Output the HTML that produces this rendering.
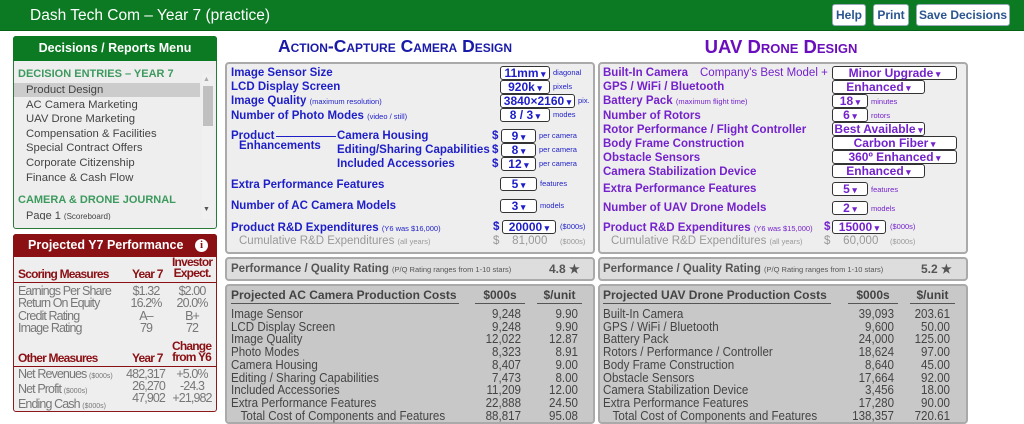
<!DOCTYPE html>
<html><head><meta charset="utf-8"><style>
*{margin:0;padding:0;box-sizing:border-box}
body{width:1024px;height:419px;overflow:hidden;background:#fff;font-family:"Liberation Sans",Arial,sans-serif;position:relative}
.a{position:absolute;white-space:nowrap}
#hdr{left:0;top:0;width:1024px;height:31px;background:#0b7a22;border-bottom:1px solid #066016}
.btn{position:absolute;top:4px;height:22px;background:#fff;border:1px solid #9ab;border-radius:3px;color:#2a5590;font-weight:bold;font-size:12px;line-height:20px;text-align:center}
.box{position:absolute;background:#eee;border:2px solid #aaa;border-radius:4px}
.lb{font-weight:bold;font-size:11.5px;line-height:14px}
.bl{color:#1e1ec8}.pu{color:#7422cc}
.sm{font-weight:normal;font-size:7.5px}
.sel{position:absolute;height:14px;background:#fff;border:1px solid #333;border-radius:3px;font-weight:bold;font-size:12px;line-height:12px;text-align:center}
.sel:after{content:" \25BE";font-size:9px}
.un{font-size:7.5px;line-height:14px}
.gr{color:#999}
.crow{font-size:13.3px;line-height:12.7px;color:#444;transform:scaleX(0.87);transform-origin:0 0}
.crr{transform-origin:100% 0}
.pt{color:#777;font-size:12.5px;line-height:12.3px;letter-spacing:-0.9px}
.ph{color:#8b1014;font-size:12px;letter-spacing:-0.8px;font-weight:bold}
</style></head><body>
<div id="hdr" class="a"></div>
<div class="a" style="left:30px;top:7px;color:#fff;font-size:15.5px">Dash Tech Com – Year 7 (practice)</div>
<div class="btn" style="left:832px;width:34px">Help</div>
<div class="btn" style="left:873px;width:36px">Print</div>
<div class="btn" style="left:916px;width:94px">Save Decisions</div>

<!-- left menu -->
<div class="a" style="left:13px;top:36px;width:204px;height:193px;border:1px solid #2a7a3a;border-radius:3px;background:#eee"></div>
<div class="a" style="left:13px;top:36px;width:204px;height:25px;background:#0b7a22;border-radius:3px 3px 0 0;color:#fff;font-weight:bold;font-size:12.5px;line-height:25px;text-align:center">Decisions / Reports Menu</div>
<div class="a" style="left:18px;top:68px;color:#3d9a5e;font-weight:bold;font-size:11px">DECISION ENTRIES – YEAR 7</div>
<div class="a" style="left:14px;top:83px;width:186px;height:14px;background:#ccc"></div>
<div class="a" style="left:26px;top:83px;color:#444;font-size:11.3px;line-height:14.6px">Product Design<br>AC Camera Marketing<br>UAV Drone Marketing<br>Compensation &amp; Facilities<br>Special Contract Offers<br>Corporate Citizenship<br>Finance &amp; Cash Flow</div>
<div class="a" style="left:18px;top:194px;color:#3d9a5e;font-weight:bold;font-size:11px">CAMERA &amp; DRONE JOURNAL</div>
<div class="a" style="left:26px;top:209px;height:11px;overflow:hidden;color:#444;font-size:11px;line-height:14px">Page 1 <span style="font-size:8px">(Scoreboard)</span></div>
<div class="a" style="left:202px;top:74px;width:12px;height:145px;background:#f0f0f0"></div>
<div class="a" style="left:203px;top:76px;font-size:7px;color:#aaa">▲</div>
<div class="a" style="left:203px;top:206px;font-size:7px;color:#555">▼</div>
<div class="a" style="left:203px;top:86px;width:10px;height:40px;background:#c0c0c0"></div>

<!-- performance -->
<div class="a" style="left:13px;top:234px;width:204px;height:178px;border:1px solid #8b1a1a;border-radius:3px;background:#eee"></div>
<div class="a" style="left:13px;top:234px;width:204px;height:23px;background:#8b1014;border-radius:3px 3px 0 0;color:#fff;font-weight:bold;font-size:12.5px;line-height:23px;padding-left:15px">Projected Y7 Performance</div>
<div class="a" style="left:195px;top:239px;width:13px;height:13px;border-radius:50%;background:#fff;color:#8b1014;font-weight:bold;font-size:11px;line-height:13px;text-align:center;font-family:'Liberation Serif',serif">i</div>
<div class="a ph" style="left:18px;top:267px">Scoring Measures</div>
<div class="a ph" style="left:132px;top:267px">Year 7</div>
<div class="a ph" style="left:172px;top:257px;line-height:10.5px;text-align:center">Investor<br>Expect.</div>
<div class="a" style="left:14px;top:282px;width:202px;border-top:1px solid #8b1014"></div>
<div class="a pt" style="left:18px;top:285px">Earnings Per Share<br>Return On Equity<br>Credit Rating<br>Image Rating</div>
<div class="a pt" style="left:126px;top:285px;width:40px;text-align:center">$1.32<br>16.2%<br>A–<br>79</div>
<div class="a pt" style="left:170px;top:285px;width:44px;text-align:center">$2.00<br>20.0%<br>B+<br>72</div>
<div class="a ph" style="left:18px;top:351px">Other Measures</div>
<div class="a ph" style="left:132px;top:351px">Year 7</div>
<div class="a ph" style="left:172px;top:341px;line-height:10.5px;text-align:center">Change<br>from Y6</div>
<div class="a" style="left:14px;top:366px;width:202px;border-top:1px solid #8b1014"></div>
<div class="a pt" style="left:18px;top:368px;line-height:12px">Net Revenues <span style="font-size:7px;letter-spacing:0">($000s)</span><br>Net Profit <span style="font-size:7px;letter-spacing:0">($000s)</span><br>Ending Cash <span style="font-size:7px;letter-spacing:0">($000s)</span></div>
<div class="a pt" style="left:122px;top:368px;width:43px;text-align:right;line-height:12px">482,317<br>26,270<br>47,902</div>
<div class="a pt" style="left:168px;top:368px;width:48px;text-align:center;line-height:12px">+5.0%<br>-24.3<br>+21,982</div>

<!-- titles -->
<div class="a" style="left:225px;top:36px;width:340px;text-align:center;color:#1a1aa8;font-weight:bold;font-size:17.5px;font-variant:small-caps">Action-Capture Camera Design</div>
<div class="a" style="left:598px;top:36px;width:366px;text-align:center;color:#6a0dbd;font-weight:bold;font-size:18.5px;font-variant:small-caps">UAV Drone Design</div>

<!-- middle box -->
<div class="box" style="left:225px;top:62px;width:370px;height:192px"></div>
<div class="a lb bl" style="left:231px;top:66px;line-height:14px">Image Sensor Size<br>LCD Display Screen<br>Image Quality <span class="sm">(maximum resolution)</span><br>Number of Photo Modes <span class="sm">(video / still)</span></div>
<div class="sel bl" style="left:500px;top:66px;width:50px">11mm</div>
<div class="sel bl" style="left:500px;top:80px;width:50px">920k</div>
<div class="sel bl" style="left:500px;top:94px;width:75px">3840×2160</div>
<div class="sel bl" style="left:500px;top:108px;width:50px">8 / 3</div>
<div class="a un bl" style="left:553px;top:66px">diagonal</div>
<div class="a un bl" style="left:553px;top:80px">pixels</div>
<div class="a un bl" style="left:578px;top:94px">pix.</div>
<div class="a un bl" style="left:553px;top:108px">modes</div>
<div class="a lb bl" style="left:231px;top:129px">Product</div>
<div class="a" style="left:276px;top:136px;width:60px;border-top:1px solid #1e1ec8"></div>
<div class="a lb bl" style="left:239px;top:139px">Enhancements</div>
<div class="a lb bl" style="left:337px;top:129px;line-height:14px">Camera Housing<br>Editing/Sharing Capabilities<br>Included Accessories</div>
<div class="a lb bl" style="left:492px;top:129px;line-height:14px">$<br>$<br>$</div>
<div class="sel bl" style="left:501px;top:129px;width:35px">9</div>
<div class="sel bl" style="left:501px;top:143px;width:35px">8</div>
<div class="sel bl" style="left:501px;top:157px;width:35px">12</div>
<div class="a un bl" style="left:539px;top:129px;line-height:14px">per camera<br>per camera<br>per camera</div>
<div class="a lb bl" style="left:231px;top:178px">Extra Performance Features</div>
<div class="sel bl" style="left:500px;top:177px;width:37px">5</div>
<div class="a un bl" style="left:540px;top:177px">features</div>
<div class="a lb bl" style="left:231px;top:199px">Number of AC Camera Models</div>
<div class="sel bl" style="left:500px;top:199px;width:37px">3</div>
<div class="a un bl" style="left:540px;top:199px">models</div>
<div class="a lb bl" style="left:231px;top:221px">Product R&amp;D Expenditures <span class="sm">(Y6 was $16,000)</span></div>
<div class="a lb bl" style="left:493px;top:220px">$</div>
<div class="sel bl" style="left:502px;top:220px;width:54px">20000</div>
<div class="a un bl" style="left:560px;top:220px">($000s)</div>
<div class="a gr" style="left:239px;top:235px;font-size:11.5px">Cumulative R&amp;D Expenditures <span style="font-size:7.5px">(all years)</span></div>
<div class="a gr" style="left:493px;top:235px;font-size:11.5px">$&nbsp;&nbsp;&nbsp;&nbsp;81,000</div>
<div class="a gr un" style="left:560px;top:235px">($000s)</div>

<div class="box" style="left:225px;top:257px;width:370px;height:24px;background:#ddd"></div>
<div class="a" style="left:231px;top:263px;color:#555;font-weight:bold;font-size:11.5px">Performance / Quality Rating <span style="font-weight:normal;font-size:7.5px">(P/Q Rating ranges from 1-10 stars)</span></div>
<div class="a" style="left:549px;top:262px;color:#555;font-weight:bold;font-size:12px">4.8 ★</div>

<div class="box" style="left:225px;top:284px;width:370px;height:140px;background:#c8c8c8"></div>
<div class="a" style="left:231px;top:288px;width:228px;border-bottom:1px solid #555;color:#444;font-weight:bold;font-size:12px;line-height:15px">Projected AC Camera Production Costs</div>
<div class="a" style="left:475px;top:288px;width:50px;text-align:center;border-bottom:1px solid #555;color:#444;font-weight:bold;font-size:12px;line-height:15px">$000s</div>
<div class="a" style="left:537px;top:288px;width:45px;text-align:center;border-bottom:1px solid #555;color:#444;font-weight:bold;font-size:12px;line-height:15px">$/unit</div>
<div class="a crow" style="left:231px;top:308px">Image Sensor<br>LCD Display Screen<br>Image Quality<br>Photo Modes<br>Camera Housing<br>Editing / Sharing Capabilities<br>Included Accessories<br>Extra Performance Features<br>&nbsp;&nbsp;&nbsp;Total Cost of Components and Features</div>
<div class="a crow crr" style="left:460px;top:308px;width:61px;text-align:right">9,248<br>9,248<br>12,022<br>8,323<br>8,407<br>7,473<br>11,209<br>22,888<br>88,817</div>
<div class="a crow crr" style="left:530px;top:308px;width:48px;text-align:right">9.90<br>9.90<br>12.87<br>8.91<br>9.00<br>8.00<br>12.00<br>24.50<br>95.08</div>

<!-- right box -->
<div class="box" style="left:598px;top:62px;width:370px;height:192px"></div>
<div class="a lb pu" style="left:603px;top:66px;line-height:14px">Built-In Camera<br>GPS / WiFi / Bluetooth<br>Battery Pack <span class="sm">(maximum flight time)</span><br>Number of Rotors<br>Rotor Performance / Flight Controller<br>Body Frame Construction<br>Obstacle Sensors<br>Camera Stabilization Device</div>
<div class="a pu" style="left:700px;top:66px;font-size:11.5px;line-height:14px">Company's Best Model +</div>
<div class="sel pu" style="left:832px;top:66px;width:125px">Minor Upgrade</div>
<div class="sel pu" style="left:832px;top:80px;width:93px">Enhanced</div>
<div class="sel pu" style="left:832px;top:94px;width:36px">18</div>
<div class="sel pu" style="left:832px;top:108px;width:36px">6</div>
<div class="sel pu" style="left:832px;top:122px;width:93px">Best Available</div>
<div class="sel pu" style="left:832px;top:136px;width:125px">Carbon Fiber</div>
<div class="sel pu" style="left:832px;top:150px;width:125px">360º Enhanced</div>
<div class="sel pu" style="left:832px;top:164px;width:93px">Enhanced</div>
<div class="a un pu" style="left:871px;top:95px">minutes</div>
<div class="a un pu" style="left:871px;top:109px">rotors</div>
<div class="a lb pu" style="left:603px;top:182px">Extra Performance Features</div>
<div class="sel pu" style="left:832px;top:182px;width:36px">5</div>
<div class="a un pu" style="left:871px;top:183px">features</div>
<div class="a lb pu" style="left:603px;top:201px">Number of UAV Drone Models</div>
<div class="sel pu" style="left:832px;top:201px;width:36px">2</div>
<div class="a un pu" style="left:871px;top:202px">models</div>
<div class="a lb pu" style="left:603px;top:221px">Product R&amp;D Expenditures <span class="sm">(Y6 was $15,000)</span></div>
<div class="a lb pu" style="left:824px;top:220px">$</div>
<div class="sel pu" style="left:832px;top:220px;width:54px">15000</div>
<div class="a un pu" style="left:890px;top:220px">($000s)</div>
<div class="a gr" style="left:611px;top:235px;font-size:11.5px">Cumulative R&amp;D Expenditures <span style="font-size:7.5px">(all years)</span></div>
<div class="a gr" style="left:824px;top:235px;font-size:11.5px">$&nbsp;&nbsp;&nbsp;&nbsp;60,000</div>
<div class="a gr un" style="left:890px;top:235px">($000s)</div>

<div class="box" style="left:598px;top:257px;width:370px;height:24px;background:#ddd"></div>
<div class="a" style="left:603px;top:263px;color:#555;font-weight:bold;font-size:11.5px">Performance / Quality Rating <span style="font-weight:normal;font-size:7.5px">(P/Q Rating ranges from 1-10 stars)</span></div>
<div class="a" style="left:921px;top:262px;color:#555;font-weight:bold;font-size:12px">5.2 ★</div>

<div class="box" style="left:598px;top:284px;width:370px;height:140px;background:#c8c8c8"></div>
<div class="a" style="left:603px;top:288px;width:228px;border-bottom:1px solid #555;color:#444;font-weight:bold;font-size:12px;line-height:15px">Projected UAV Drone Production Costs</div>
<div class="a" style="left:848px;top:288px;width:50px;text-align:center;border-bottom:1px solid #555;color:#444;font-weight:bold;font-size:12px;line-height:15px">$000s</div>
<div class="a" style="left:910px;top:288px;width:45px;text-align:center;border-bottom:1px solid #555;color:#444;font-weight:bold;font-size:12px;line-height:15px">$/unit</div>
<div class="a crow" style="left:603px;top:308px">Built-In Camera<br>GPS / WiFi / Bluetooth<br>Battery Pack<br>Rotors / Performance / Controller<br>Body Frame Construction<br>Obstacle Sensors<br>Camera Stabilization Device<br>Extra Performance Features<br>&nbsp;&nbsp;&nbsp;Total Cost of Components and Features</div>
<div class="a crow crr" style="left:833px;top:308px;width:61px;text-align:right">39,093<br>9,600<br>24,000<br>18,624<br>8,640<br>17,664<br>3,456<br>17,280<br>138,357</div>
<div class="a crow crr" style="left:900px;top:308px;width:50px;text-align:right">203.61<br>50.00<br>125.00<br>97.00<br>45.00<br>92.00<br>18.00<br>90.00<br>720.61</div>
</body></html>
